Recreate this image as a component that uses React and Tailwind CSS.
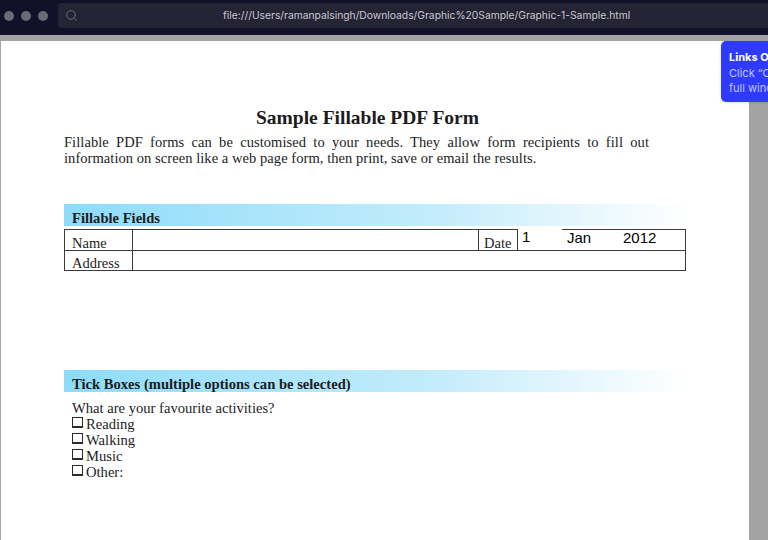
import { Search } from "lucide-react";

const activities = ["Reading", "Walking", "Music", "Other:"];

function SectionHeading({ children }) {
  return (
    <div className="h-[22px] w-[626px] bg-gradient-to-r from-[#8cdcf9] via-[#c4ecfb] via-60% to-white pl-[8px] pt-[6px] text-[14.6px] font-bold leading-[17px] text-[#1c1c1c]">
      {children}
    </div>
  );
}

function TickBox({ label }) {
  return (
    <div className="flex h-4 items-center">
      <span className="mb-[3px] h-[11px] w-[11px] border border-b-2 border-[#2a2a2a] bg-white"></span>
      <span className="ml-[3px]">{label}</span>
    </div>
  );
}

function App() {
  return (
    <div className="relative flex h-[540px] w-[768px] flex-col overflow-hidden bg-[#a3a3a3] font-['Liberation_Serif',serif]">
      {/* Browser bar */}
      <div className="flex h-[35px] shrink-0 items-center bg-[#13112a] pl-[4px] pb-[4px]">
        <div className="flex gap-[7px]">
          <span className="h-[10px] w-[10px] rounded-full bg-[#6a6a72]"></span>
          <span className="h-[10px] w-[10px] rounded-full bg-[#6a6a72]"></span>
          <span className="h-[10px] w-[10px] rounded-full bg-[#6a6a72]"></span>
        </div>
        <div className="ml-[10px] flex h-[25px] flex-1 items-center rounded-l-[4px] bg-[#252336] pl-[7px]">
          <Search className="h-[13px] w-[13px] text-[#77767f]" strokeWidth={1.5} />
          <span className="ml-[145px] font-['Inter',sans-serif] text-[10.3px] text-[#c9c8cd]">
            file:///Users/ramanpalsingh/Downloads/Graphic%20Sample/Graphic-1-Sample.html
          </span>
        </div>
      </div>

      {/* PDF page */}
      <div className="mt-[6px] ml-[1px] w-[748px] flex-1 bg-white pl-[63px] text-[14.5px] leading-4 text-[#1c1c1c]">
        <h1 className="mt-[66px] w-[607px] text-center text-[19.5px] font-bold leading-[22px]">
          Sample Fillable PDF Form
        </h1>
        <p className="mt-[5px] w-[585px] text-justify text-[14.5px] leading-[16px] tracking-[0.06px]">
          Fillable PDF forms can be customised to your needs. They allow form recipients to fill out
          information on screen like a web page form, then print, save or email the results.
        </p>

        <div className="mt-[38px]">
          <SectionHeading>Fillable Fields</SectionHeading>
        </div>

        <div className="mt-[3px] w-[622px] border-b border-l border-r border-[#3a3a3a]">
          <div className="flex h-[21px]">
            <div className="w-[68px] border-t border-r border-[#3a3a3a] pl-[7px] pt-[5px]">Name</div>
            <div className="w-[346px] border-t border-r border-[#3a3a3a]"></div>
            <div className="w-[39px] border-t border-r border-[#3a3a3a] pl-[5px] pt-[5px]">Date</div>
            <div className="flex flex-1 font-['Liberation_Sans',sans-serif] text-[15px] leading-[15px] text-black">
              <span className="w-[44px] pl-[4px]">1</span>
              <div className="flex flex-1 border-t border-[#3a3a3a] pl-[5px]">
                <span className="w-[56px]">Jan</span>
                <span>2012</span>
              </div>
            </div>
          </div>
          <div className="flex h-[20px] border-t border-[#3a3a3a]">
            <div className="w-[68px] border-r border-[#3a3a3a] pl-[7px] pt-[4px]">Address</div>
          </div>
        </div>

        <div className="mt-[99px]">
          <SectionHeading>Tick Boxes (multiple options can be selected)</SectionHeading>
        </div>

        <div className="mt-[8px] pl-[8px] text-[14.6px]">
          <div>What are your favourite activities?</div>
          {activities.map((a) => (
            <TickBox key={a} label={a} />
          ))}
        </div>
      </div>

      {/* Toast */}
      <div className="absolute left-[721px] top-[41px] h-[61px] w-[120px] rounded-[5px] bg-[#2e3bff] pl-[8px] pt-[9px] font-['Inter',sans-serif] text-[11px] leading-[15px] shadow">
        <div className="font-bold text-white">Links Open</div>
        <div className="mt-[1px] text-[#c3c6ff]">Click “Open</div>
        <div className="text-[#c3c6ff]">full window</div>
      </div>
    </div>
  );
}

export default App;
